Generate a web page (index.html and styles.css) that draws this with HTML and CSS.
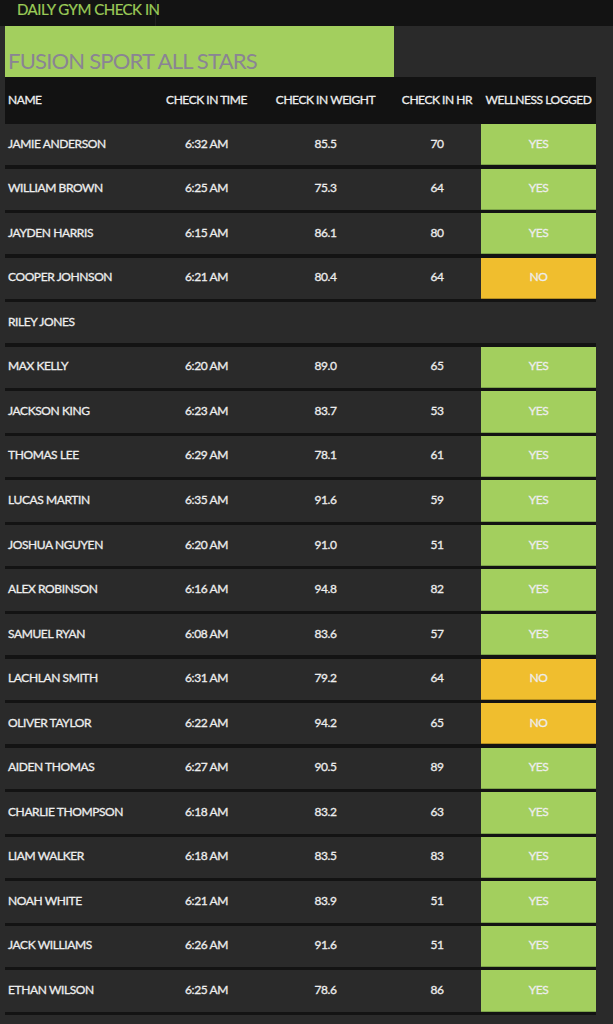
FILE: index.html
```html
<!DOCTYPE html>
<html>
<head>
<meta charset="utf-8">
<link rel="stylesheet" href="styles.css">
</head>
<body>
<div class="topbar"><div class="topcell">DAILY GYM CHECK IN</div></div>
<div class="sheet">
  <div class="banner"><span class="team">FUSION SPORT ALL STARS</span></div>
  <div class="table">
    <div class="row head">
      <div class="c name">NAME</div><div class="c">CHECK IN TIME</div><div class="c">CHECK IN WEIGHT</div><div class="c">CHECK IN HR</div><div class="c">WELLNESS LOGGED</div>
    </div>
    <div class="rows">
      <div class="row"><div class="c name">JAMIE ANDERSON</div><div class="c">6:32 AM</div><div class="c">85.5</div><div class="c">70</div><div class="c yes">YES</div></div>
      <div class="row"><div class="c name">WILLIAM BROWN</div><div class="c">6:25 AM</div><div class="c">75.3</div><div class="c">64</div><div class="c yes">YES</div></div>
      <div class="row"><div class="c name">JAYDEN HARRIS</div><div class="c">6:15 AM</div><div class="c">86.1</div><div class="c">80</div><div class="c yes">YES</div></div>
      <div class="row"><div class="c name">COOPER JOHNSON</div><div class="c">6:21 AM</div><div class="c">80.4</div><div class="c">64</div><div class="c no">NO</div></div>
      <div class="row"><div class="c name">RILEY JONES</div><div class="c"></div><div class="c"></div><div class="c"></div><div class="c"></div></div>
      <div class="row"><div class="c name">MAX KELLY</div><div class="c">6:20 AM</div><div class="c">89.0</div><div class="c">65</div><div class="c yes">YES</div></div>
      <div class="row"><div class="c name">JACKSON KING</div><div class="c">6:23 AM</div><div class="c">83.7</div><div class="c">53</div><div class="c yes">YES</div></div>
      <div class="row"><div class="c name">THOMAS LEE</div><div class="c">6:29 AM</div><div class="c">78.1</div><div class="c">61</div><div class="c yes">YES</div></div>
      <div class="row"><div class="c name">LUCAS MARTIN</div><div class="c">6:35 AM</div><div class="c">91.6</div><div class="c">59</div><div class="c yes">YES</div></div>
      <div class="row"><div class="c name">JOSHUA NGUYEN</div><div class="c">6:20 AM</div><div class="c">91.0</div><div class="c">51</div><div class="c yes">YES</div></div>
      <div class="row"><div class="c name">ALEX ROBINSON</div><div class="c">6:16 AM</div><div class="c">94.8</div><div class="c">82</div><div class="c yes">YES</div></div>
      <div class="row"><div class="c name">SAMUEL RYAN</div><div class="c">6:08 AM</div><div class="c">83.6</div><div class="c">57</div><div class="c yes">YES</div></div>
      <div class="row"><div class="c name">LACHLAN SMITH</div><div class="c">6:31 AM</div><div class="c">79.2</div><div class="c">64</div><div class="c no">NO</div></div>
      <div class="row"><div class="c name">OLIVER TAYLOR</div><div class="c">6:22 AM</div><div class="c">94.2</div><div class="c">65</div><div class="c no">NO</div></div>
      <div class="row"><div class="c name">AIDEN THOMAS</div><div class="c">6:27 AM</div><div class="c">90.5</div><div class="c">89</div><div class="c yes">YES</div></div>
      <div class="row"><div class="c name">CHARLIE THOMPSON</div><div class="c">6:18 AM</div><div class="c">83.2</div><div class="c">63</div><div class="c yes">YES</div></div>
      <div class="row"><div class="c name">LIAM WALKER</div><div class="c">6:18 AM</div><div class="c">83.5</div><div class="c">83</div><div class="c yes">YES</div></div>
      <div class="row"><div class="c name">NOAH WHITE</div><div class="c">6:21 AM</div><div class="c">83.9</div><div class="c">51</div><div class="c yes">YES</div></div>
      <div class="row"><div class="c name">JACK WILLIAMS</div><div class="c">6:26 AM</div><div class="c">91.6</div><div class="c">51</div><div class="c yes">YES</div></div>
      <div class="row"><div class="c name">ETHAN WILSON</div><div class="c">6:25 AM</div><div class="c">78.6</div><div class="c">86</div><div class="c yes">YES</div></div>
    </div>
  </div>
</div>
</body>
</html>
```
FILE: styles.css
```css
html, body {
  margin: 0;
  padding: 0;
  background: #2a2a2a;
  height: 1024px;
  overflow: hidden;
}
body {
  font-family: Lato, "Open Sans", sans-serif;
  color: #ededed;
}
.topbar {
  height: 26px;
  background: #131313;
  display: flex;
}
.topcell {
  width: 138px;
  padding-left: 17px;
  border-right: 1px solid #222;
  color: #9bcb58;
  font-size: 15px;
  letter-spacing: -0.5px;
  line-height: 19px;
  white-space: nowrap;
  -webkit-text-stroke: 0.2px #9bcb58;
}
.sheet {
  padding: 0 17px 0 5px;
}
.banner {
  width: 389px;
  height: 51px;
  background: #a3cf5e;
  display: flex;
  align-items: flex-end;
  box-sizing: border-box;
  padding: 0 0 3px 3px;
}
.team {
  color: #8a8494;
  font-size: 22px;
  letter-spacing: -0.8px;
  line-height: 26px;
  white-space: nowrap;
}
.table {
  width: 591px;
}
.row {
  display: grid;
  grid-template-columns: 150px 103px 135px 88px 115px;
  height: 41.3px;
  background: #2a2a2a;
  font-size: 12px;
  letter-spacing: -0.4px;
  -webkit-text-stroke: 0.3px #ededed;
}
.row.head {
  height: 47px;
  background: #121212;
  letter-spacing: -0.45px;
}
.row.head .c {
  padding-bottom: 2px;
}
.rows {
  display: flex;
  flex-direction: column;
  gap: 3.25px;
  padding-bottom: 3.25px;
  background: #131313;
}
.c {
  display: flex;
  align-items: center;
  justify-content: center;
  white-space: nowrap;
  padding-bottom: 3px;
  box-sizing: border-box;
}
.c.name {
  justify-content: flex-start;
  padding-left: 3px;
}
.yes {
  background: #a3cf5e;
  box-shadow: inset 0 -1px 0 #7ea54a;
}
.no {
  background: #f0be2e;
  box-shadow: inset 0 -1px 0 #b58f22;
}
```
